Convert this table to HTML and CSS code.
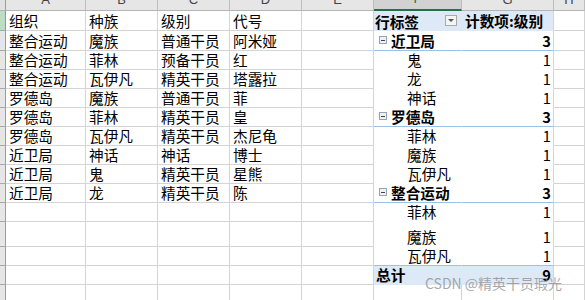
FILE: index.html
```html
<!DOCTYPE html>
<html lang="zh">
<head>
<meta charset="utf-8">
<title>Sheet</title>
<link rel="stylesheet" href="styles.css">
</head>
<body>
<div class="sheet">
  <div class="row hdr">
    <div class="rh corner"></div>
    <div class="ch"><span>A</span></div>
    <div class="ch"><span>B</span></div>
    <div class="ch"><span>C</span></div>
    <div class="ch"><span>D</span></div>
    <div class="ch"><span>E</span></div>
    <div class="ch sel"><span>F</span></div>
    <div class="ch"><span>G</span></div>
    <div class="ch"><span>H</span></div>
  </div>

  <div class="row h20">
    <div class="rh rsel"></div>
    <div class="c">组织</div><div class="c">种族</div><div class="c">级别</div><div class="c">代号</div><div class="c"></div>
    <div class="c pf ph b"><span>行标签</span><span class="dd"></span></div>
    <div class="c pg ph b lft">计数项:级别</div>
    <div class="c"></div>
  </div>

  <div class="row h20">
    <div class="rh"></div>
    <div class="c">整合运动</div><div class="c">魔族</div><div class="c">普通干员</div><div class="c">阿米娅</div><div class="c"></div>
    <div class="c pf grp b"><span class="tog"></span>近卫局</div>
    <div class="c pg grp b">3</div>
    <div class="c"></div>
  </div>

  <div class="row">
    <div class="rh"></div>
    <div class="c">整合运动</div><div class="c">菲林</div><div class="c">预备干员</div><div class="c">红</div><div class="c"></div>
    <div class="c pf item">鬼</div>
    <div class="c pg">1</div>
    <div class="c"></div>
  </div>

  <div class="row">
    <div class="rh"></div>
    <div class="c">整合运动</div><div class="c">瓦伊凡</div><div class="c">精英干员</div><div class="c">塔露拉</div><div class="c"></div>
    <div class="c pf item">龙</div>
    <div class="c pg">1</div>
    <div class="c"></div>
  </div>

  <div class="row">
    <div class="rh"></div>
    <div class="c">罗德岛</div><div class="c">魔族</div><div class="c">普通干员</div><div class="c">菲</div><div class="c"></div>
    <div class="c pf item">神话</div>
    <div class="c pg">1</div>
    <div class="c"></div>
  </div>

  <div class="row">
    <div class="rh"></div>
    <div class="c">罗德岛</div><div class="c">菲林</div><div class="c">精英干员</div><div class="c">皇</div><div class="c"></div>
    <div class="c pf grp b"><span class="tog"></span>罗德岛</div>
    <div class="c pg grp b">3</div>
    <div class="c"></div>
  </div>

  <div class="row">
    <div class="rh"></div>
    <div class="c">罗德岛</div><div class="c">瓦伊凡</div><div class="c">精英干员</div><div class="c">杰尼龟</div><div class="c"></div>
    <div class="c pf item">菲林</div>
    <div class="c pg">1</div>
    <div class="c"></div>
  </div>

  <div class="row">
    <div class="rh"></div>
    <div class="c">近卫局</div><div class="c">神话</div><div class="c">神话</div><div class="c">博士</div><div class="c"></div>
    <div class="c pf item">魔族</div>
    <div class="c pg">1</div>
    <div class="c"></div>
  </div>

  <div class="row">
    <div class="rh"></div>
    <div class="c">近卫局</div><div class="c">鬼</div><div class="c">精英干员</div><div class="c">星熊</div><div class="c"></div>
    <div class="c pf item">瓦伊凡</div>
    <div class="c pg">1</div>
    <div class="c"></div>
  </div>

  <div class="row">
    <div class="rh"></div>
    <div class="c">近卫局</div><div class="c">龙</div><div class="c">精英干员</div><div class="c">陈</div><div class="c"></div>
    <div class="c pf grp b"><span class="tog"></span>整合运动</div>
    <div class="c pg grp b">3</div>
    <div class="c"></div>
  </div>

  <div class="row">
    <div class="rh"></div>
    <div class="c"></div><div class="c"></div><div class="c"></div><div class="c"></div><div class="c"></div>
    <div class="c pf item">菲林</div>
    <div class="c pg">1</div>
    <div class="c"></div>
  </div>

  <div class="row h25">
    <div class="rh"></div>
    <div class="c"></div><div class="c"></div><div class="c"></div><div class="c"></div><div class="c"></div>
    <div class="c pf item">魔族</div>
    <div class="c pg">1</div>
    <div class="c"></div>
  </div>

  <div class="row">
    <div class="rh"></div>
    <div class="c"></div><div class="c"></div><div class="c"></div><div class="c"></div><div class="c"></div>
    <div class="c pf item grp">瓦伊凡</div>
    <div class="c pg grp">1</div>
    <div class="c"></div>
  </div>

  <div class="row">
    <div class="rh"></div>
    <div class="c"></div><div class="c"></div><div class="c"></div><div class="c"></div><div class="c"></div>
    <div class="c pf tot b">总计</div>
    <div class="c pg tot b">9</div>
    <div class="c"></div>
  </div>

  <div class="row">
    <div class="rh"></div>
    <div class="c"></div><div class="c"></div><div class="c"></div><div class="c"></div><div class="c"></div>
    <div class="c"></div><div class="c"></div><div class="c"></div>
  </div>

  <div class="watermark">CSDN @精英干员瑕光</div>
</div>
</body>
</html>
```

FILE: styles.css
```css
html, body {
  margin: 0;
  padding: 0;
  background: #ffffff;
  overflow: hidden;
}

.sheet {
  position: relative;
  width: 585px;
  height: 300px;
  overflow: hidden;
  font-family: "Noto Sans CJK SC", "Noto Sans", sans-serif;
  font-size: 14.67px;
  color: #000;
}

.row {
  display: grid;
  grid-template-columns: 6px 80px 72px 72px 72px 72px 88px 92px 1fr;
  height: 19px;
}

.row.hdr { height: 11px; }
.row.h20 { height: 20px; }
.row.h25 { height: 25px; }

.rh {
  box-sizing: border-box;
  background: #e6e6e6;
  border-right: 1px solid #9c9c9c;
  border-bottom: 1px solid #a8a8a8;
}

.rh.rsel {
  background: #bddcc6;
  border-right-color: #6fae83;
}

.rh.corner {
  background: #e2e2e2;
  border-bottom-color: #b5b5b5;
}

.ch {
  box-sizing: border-box;
  background: #e6e6e6;
  border-right: 1px solid #bdbdbd;
  border-bottom: 1px solid #b5b5b5;
  display: flex;
  justify-content: center;
  align-items: flex-end;
  overflow: hidden;
  font-family: "Liberation Sans", Arial, sans-serif;
  font-size: 13px;
  color: #444;
}

.ch span {
  line-height: 13px;
  margin-bottom: 4px;
}

.ch.sel {
  background: #d2d2d2;
  border-bottom: 2px solid #217346;
  color: #217346;
}

.c {
  box-sizing: border-box;
  border-right: 1px solid #d4d4d4;
  border-bottom: 1px solid #d4d4d4;
  display: flex;
  align-items: flex-end;
  padding: 0 3px 2px;
  line-height: 15px;
  white-space: nowrap;
  overflow: visible;
}

.c.b { font-weight: bold; }

/* pivot table */
.c.pf {
  border-right-color: transparent;
  border-bottom-color: transparent;
  padding-left: 1px;
}

.c.pg {
  border-bottom-color: transparent;
  justify-content: flex-end;
  padding-right: 2px;
}

.c.pg.lft {
  justify-content: flex-start;
  padding-left: 3px;
}

.c.ph {
  background: #dde9f6;
}

.c.pf.ph {
  align-items: center;
  padding-bottom: 0;
}

.c.pf.ph span:first-child {
  margin-top: 1px;
}

.dd {
  margin-left: auto;
  margin-right: 1px;
  width: 12px;
  height: 11px;
  box-sizing: border-box;
  border: 1px solid #a9a9a9;
  background: #f4f4f4;
  display: flex;
  align-items: center;
  justify-content: center;
}

.dd::after {
  content: "";
  border-left: 3px solid transparent;
  border-right: 3px solid transparent;
  border-top: 3px solid #555;
}

.c.grp {
  border-bottom-color: #9bc2e6;
}

.tog {
  width: 8px;
  height: 8px;
  box-sizing: border-box;
  border: 1px solid #98a2b3;
  background: #eef1f5;
  margin: 0 4px 4px 4px;
  display: flex;
  align-items: center;
  justify-content: center;
}

.tog::after {
  content: "";
  width: 4px;
  height: 1px;
  background: #444;
}

.c.item {
  padding-left: 33px;
}

.c.tot {
  background: #dde9f6;
  border-bottom-color: transparent;
}

.c.pf.tot {
  padding-left: 2px;
}

.watermark {
  position: absolute;
  left: 425px;
  top: 274px;
  font-family: "Noto Sans CJK SC", "Noto Sans", sans-serif;
  font-size: 14px;
  line-height: 18px;
  color: rgba(140, 140, 140, 0.75);
  white-space: nowrap;
}
```
